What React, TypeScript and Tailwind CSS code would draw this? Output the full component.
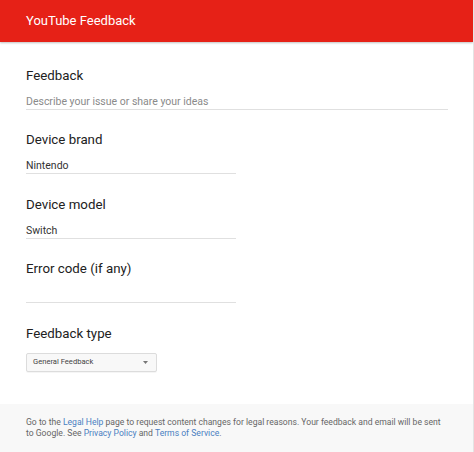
const fields = [
  { label: "Device brand", value: "Nintendo" },
  { label: "Device model", value: "Switch" },
  { label: "Error code (if any)", value: "" },
];

function Field({ label, value, placeholder, wide }: { label: string; value?: string; placeholder?: string; wide?: boolean }) {
  return (
    <div className="mb-[20.4px] flex flex-col">
      <label className="h-5 text-[13.3px] leading-5 text-[#212121]">{label}</label>
      <div
        className={`mt-[6px] h-[18px] border-b border-[#e0e0e0] pt-[2px] text-[10.5px] leading-[15px] ${
          wide ? "w-[422px]" : "w-[210px]"
        }`}
      >
        {value ? (
          <span className="text-[#333]">{value}</span>
        ) : (
          <span className="text-[#8a8a8a]">{placeholder}</span>
        )}
      </div>
    </div>
  );
}

export default function App() {
  return (
    <div
      className="flex h-[452px] w-[474px] flex-col overflow-hidden border-r border-[#e4e4e4] bg-white"
      style={{ fontFamily: "Roboto, 'Noto Sans', sans-serif" }}
    >
      {/* Header */}
      <header className="flex h-[42px] shrink-0 items-center bg-[#e62117] px-[26px] shadow-[0_1px_2px_rgba(0,0,0,0.25)]">
        <span className="text-[13px] text-white">YouTube Feedback</span>
      </header>

      {/* Form */}
      <main className="flex-1 px-[26px] pt-[24px]">
        <Field label="Feedback" placeholder="Describe your issue or share your ideas" wide />
        {fields.map((f) => (
          <Field key={f.label} label={f.label} value={f.value} />
        ))}

        <div className="flex flex-col">
          <label className="h-5 text-[13.3px] leading-5 text-[#212121]">Feedback type</label>
          <button className="mt-[9px] flex h-[19px] w-[131px] items-center justify-between rounded-[2px] border border-[#dcdcdc] bg-[#f8f8f8] pl-[6px] pr-[8px] shadow-[0_1px_0_rgba(0,0,0,0.04)]">
            <span className="text-[7.6px] text-[#444]">General Feedback</span>
            <svg width="5" height="3" viewBox="0 0 5 3">
              <path d="M0 0h5L2.5 3z" fill="#777" />
            </svg>
          </button>
        </div>
      </main>

      {/* Footer */}
      <footer className="h-[48px] shrink-0 bg-[#f8f8f8] px-[26px] pt-[13px] text-[8.6px] leading-[11px] text-[#666]">
        <p>
          Go to the <span className="text-[#4a7fc1]">Legal Help</span> page to request content changes for legal
          reasons. Your feedback and email will be sent to Google. See{" "}
          <span className="text-[#4a7fc1]">Privacy Policy</span> and <span className="text-[#4a7fc1]">Terms of Service</span>.
        </p>
      </footer>
    </div>
  );
}
